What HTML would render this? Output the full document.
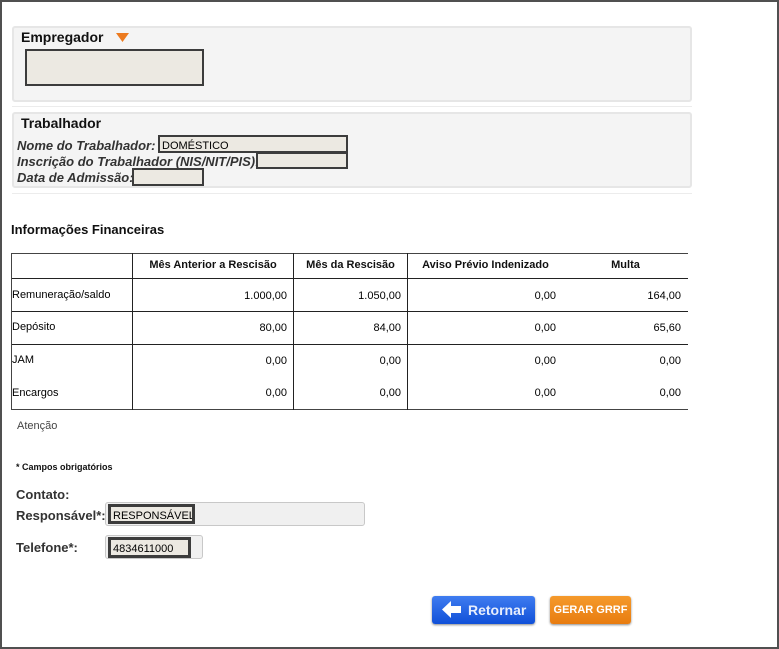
<!DOCTYPE html>
<html><head><meta charset="utf-8"><style>
*{margin:0;padding:0;box-sizing:border-box}
body{width:779px;height:649px;background:#fff;font-family:"Liberation Sans",Arial,sans-serif;position:relative;overflow:hidden}
.frame{position:absolute;left:0;top:0;width:779px;height:649px;border:2px solid #505050;border-left-width:2px}
.a{position:absolute}
.panel{position:absolute;background:#f4f4f4;border:2px solid #e6e6e6;border-radius:3px}
.inp{position:absolute;background:#ece9e2;border:2px solid #3c3c3c}
.lbl{position:absolute;font-style:italic;font-weight:bold;font-size:13px;color:#333}
h3{position:absolute;font-size:14px;font-weight:bold;color:#111}
.l{position:absolute;background:#222}
.t{position:absolute;font-size:11px;color:#000}
.r{text-align:right}
.hd{position:absolute;font-size:11px;font-weight:bold;color:#111;text-align:center}
.cl{position:absolute;font-size:13px;color:#333;font-weight:bold}
</style></head><body>
<div class="frame"></div>
<div class="panel" style="left:12px;top:26px;width:680px;height:76px"></div>
<h3 style="left:21px;top:29px">Empregador</h3>
<svg class="a" style="left:116px;top:33px" width="13" height="10"><polygon points="0,0 13,0 6.5,9" fill="#ec7a1e"/></svg>
<div class="inp" style="left:25px;top:49px;width:179px;height:37px"></div>
<div class="a" style="left:12px;top:106px;width:680px;height:1px;background:#ececec"></div>
<div class="panel" style="left:12px;top:112px;width:680px;height:76px"></div>
<h3 style="left:21px;top:115px">Trabalhador</h3>
<div class="lbl" style="left:17px;top:138px">Nome do Trabalhador:</div>
<div class="inp" style="left:158px;top:135px;width:190px;height:18px;font-size:11px;padding:3px 0 0 2px;color:#000">DOMÉSTICO</div>
<div class="lbl" style="left:17px;top:154px">Inscrição do Trabalhador (NIS/NIT/PIS):</div>
<div class="inp" style="left:256px;top:152px;width:92px;height:17px"></div>
<div class="lbl" style="left:17px;top:170px">Data de Admissão:</div>
<div class="inp" style="left:132px;top:168px;width:72px;height:18px"></div>
<div class="a" style="left:12px;top:193px;width:680px;height:1px;background:#ececec"></div>
<div class="a" style="left:11px;top:222px;font-size:13px;font-weight:bold;color:#111">Informações Financeiras</div>
<div class="l" style="left:11px;top:253px;width:677px;height:1px;background:#444"></div>
<div class="l" style="left:11px;top:278px;width:677px;height:1px"></div>
<div class="l" style="left:11px;top:311px;width:677px;height:1px"></div>
<div class="l" style="left:11px;top:344px;width:677px;height:1px"></div>
<div class="l" style="left:11px;top:409px;width:677px;height:1px;background:#444"></div>
<div class="l" style="left:11px;top:253px;width:1px;height:157px;background:#444"></div>
<div class="l" style="left:132px;top:253px;width:1px;height:157px"></div>
<div class="l" style="left:293px;top:253px;width:1px;height:157px"></div>
<div class="l" style="left:407px;top:253px;width:1px;height:157px"></div>
<div class="hd" style="left:133px;top:259px;width:160px">Mês Anterior a Rescisão</div>
<div class="hd" style="left:294px;top:259px;width:113px">Mês da Rescisão</div>
<div class="hd" style="left:408px;top:259px;width:155px">Aviso Prévio Indenizado</div>
<div class="hd" style="left:563px;top:259px;width:125px">Multa</div>
<div class="t" style="left:12px;top:289px">Remuneração/saldo</div>
<div class="t" style="left:12px;top:321px">Depósito</div>
<div class="t" style="left:12px;top:354px">JAM</div>
<div class="t" style="left:12px;top:387px">Encargos</div>
<div class="t r" style="left:140px;top:290px;width:147px">1.000,00</div>
<div class="t r" style="left:300px;top:290px;width:101px">1.050,00</div>
<div class="t r" style="left:410px;top:290px;width:146px">0,00</div>
<div class="t r" style="left:570px;top:290px;width:111px">164,00</div>
<div class="t r" style="left:140px;top:322px;width:147px">80,00</div>
<div class="t r" style="left:300px;top:322px;width:101px">84,00</div>
<div class="t r" style="left:410px;top:322px;width:146px">0,00</div>
<div class="t r" style="left:570px;top:322px;width:111px">65,60</div>
<div class="t r" style="left:140px;top:355px;width:147px">0,00</div>
<div class="t r" style="left:300px;top:355px;width:101px">0,00</div>
<div class="t r" style="left:410px;top:355px;width:146px">0,00</div>
<div class="t r" style="left:570px;top:355px;width:111px">0,00</div>
<div class="t r" style="left:140px;top:387px;width:147px">0,00</div>
<div class="t r" style="left:300px;top:387px;width:101px">0,00</div>
<div class="t r" style="left:410px;top:387px;width:146px">0,00</div>
<div class="t r" style="left:570px;top:387px;width:111px">0,00</div>
<div class="t" style="left:17px;top:420px;color:#444">Atenção</div>
<div class="a" style="left:16px;top:462px;font-size:9px;font-weight:bold;color:#111">* Campos obrigatórios</div>
<div class="cl" style="left:16px;top:487px">Contato:</div>
<div class="cl" style="left:16px;top:508px">Responsável*:</div>
<div class="a" style="left:105px;top:502px;width:260px;height:24px;background:#f0f0f0;border:1px solid #c8c8c8;border-radius:3px"></div>
<div class="inp" style="left:108px;top:504px;width:87px;height:20px;border-width:3px;font-size:11px;padding:3px 0 0 2px;color:#000;overflow:hidden;white-space:nowrap">RESPONSÁVEL</div>
<div class="cl" style="left:16px;top:540px">Telefone*:</div>
<div class="a" style="left:105px;top:535px;width:98px;height:24px;background:#f0f0f0;border:1px solid #c8c8c8;border-radius:3px"></div>
<div class="inp" style="left:108px;top:537px;width:83px;height:21px;border-width:3px;font-size:11px;padding:3px 0 0 2px;color:#000">4834611000</div>
<div class="a" style="left:432px;top:596px;width:103px;height:28px;border-radius:3px;background:linear-gradient(#3f7cf0,#1050d8);box-shadow:0 1px 2px #888"></div>
<svg class="a" style="left:442px;top:601px" width="20" height="17"><polygon points="0,8.5 9,0 9,5 19,5 19,12 9,12 9,17" fill="#fff"/></svg>
<div class="a" style="left:468px;top:602px;font-size:14px;font-weight:bold;color:#e8eefc">Retornar</div>
<div class="a" style="left:550px;top:596px;width:81px;height:28px;border-radius:3px;background:linear-gradient(#f59a2c,#e87c10);box-shadow:0 1px 2px #888"></div>
<div class="a" style="left:550px;top:604px;width:81px;text-align:center;font-size:11px;font-weight:bold;color:#fff">GERAR GRRF</div>
</body></html>
